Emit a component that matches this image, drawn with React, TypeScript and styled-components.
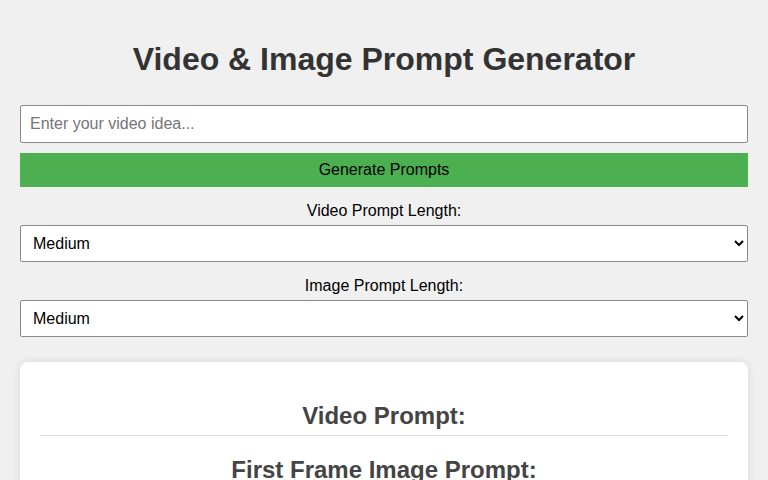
import { useState } from "react";
import styled, { createGlobalStyle } from "styled-components";

const GlobalStyle = createGlobalStyle`
  html, body {
    margin: 0;
    padding: 0;
    background: #f0f0f0;
  }
  body {
    font-family: "Liberation Sans", Arial, sans-serif;
    color: #000;
  }
  * { box-sizing: border-box; }
`;

type Length = "Short" | "Medium" | "Long";
const lengths: Length[] = ["Short", "Medium", "Long"];

export default function App() {
  const [idea, setIdea] = useState("");
  const [videoLength, setVideoLength] = useState<Length>("Medium");
  const [imageLength, setImageLength] = useState<Length>("Medium");
  const [videoPrompt, setVideoPrompt] = useState("");
  const [imagePrompt, setImagePrompt] = useState("");

  const generate = () => {
    if (!idea.trim()) return;
    setVideoPrompt(`${videoLength} video prompt for: ${idea}`);
    setImagePrompt(`${imageLength} first frame image prompt for: ${idea}`);
  };

  return (
    <Page>
      <GlobalStyle />
      <Title>Video &amp; Image Prompt Generator</Title>

      <IdeaInput
        type="text"
        placeholder="Enter your video idea..."
        value={idea}
        onChange={e => setIdea(e.target.value)}
      />
      <GenerateButton onClick={generate}>Generate Prompts</GenerateButton>

      <FieldLabel htmlFor="videoLength">Video Prompt Length:</FieldLabel>
      <LengthSelect
        id="videoLength"
        value={videoLength}
        onChange={e => setVideoLength(e.target.value as Length)}
      >
        {lengths.map(l => <option key={l} value={l}>{l}</option>)}
      </LengthSelect>

      <FieldLabel htmlFor="imageLength">Image Prompt Length:</FieldLabel>
      <LengthSelect
        id="imageLength"
        value={imageLength}
        onChange={e => setImageLength(e.target.value as Length)}
      >
        {lengths.map(l => <option key={l} value={l}>{l}</option>)}
      </LengthSelect>

      <ResultCard>
        <SectionTitle>Video Prompt:</SectionTitle>
        <PromptText>{videoPrompt}</PromptText>
        <SectionTitle>First Frame Image Prompt:</SectionTitle>
        <PromptText>{imagePrompt}</PromptText>
      </ResultCard>
    </Page>
  );
}

const Page = styled.div`
  display: flex;
  flex-direction: column;
  padding: 20px;
`;

const Title = styled.h1`
  margin: 21px 0 27px;
  text-align: center;
  font: bold 32px/37px "Liberation Sans", Arial, sans-serif;
  color: #333;
`;

const IdeaInput = styled.input`
  width: 100%;
  height: 38px;
  padding: 0 9px;
  border: 1px solid #8a8a8a;
  border-radius: 2px;
  background: #fff;
  font: 16px "Liberation Sans", Arial, sans-serif;
  color: #000;
  &::placeholder { color: #757575; }
`;

const GenerateButton = styled.button`
  margin-top: 10px;
  width: 100%;
  height: 34px;
  border: none;
  background: #4caf50;
  font: 16px "Liberation Sans", Arial, sans-serif;
  color: #000;
  cursor: pointer;
`;

const FieldLabel = styled.label`
  display: block;
  margin: 15px 0 5px;
  text-align: center;
  font: 16px/18px "Liberation Sans", Arial, sans-serif;
  color: #000;
`;

const LengthSelect = styled.select`
  width: 100%;
  height: 37px;
  padding: 0 8px;
  border: 1px solid #8a8a8a;
  border-radius: 2px;
  background: #fff;
  font: 16px "Liberation Sans", Arial, sans-serif;
  color: #000;
`;

const ResultCard = styled.section`
  margin-top: 25px;
  padding: 20px;
  background: #fff;
  border-radius: 8px;
  box-shadow: 0 0 10px rgba(0, 0, 0, 0.1);
`;

const SectionTitle = styled.h2`
  margin: 20px 0;
  padding-bottom: 5px;
  border-bottom: 1px solid #ddd;
  text-align: center;
  font: bold 24px/28px "Liberation Sans", Arial, sans-serif;
  color: #444;
`;

const PromptText = styled.div`
  white-space: pre-wrap;
  font: 16px/1.4 "Liberation Sans", Arial, sans-serif;
  color: #333;
`;
